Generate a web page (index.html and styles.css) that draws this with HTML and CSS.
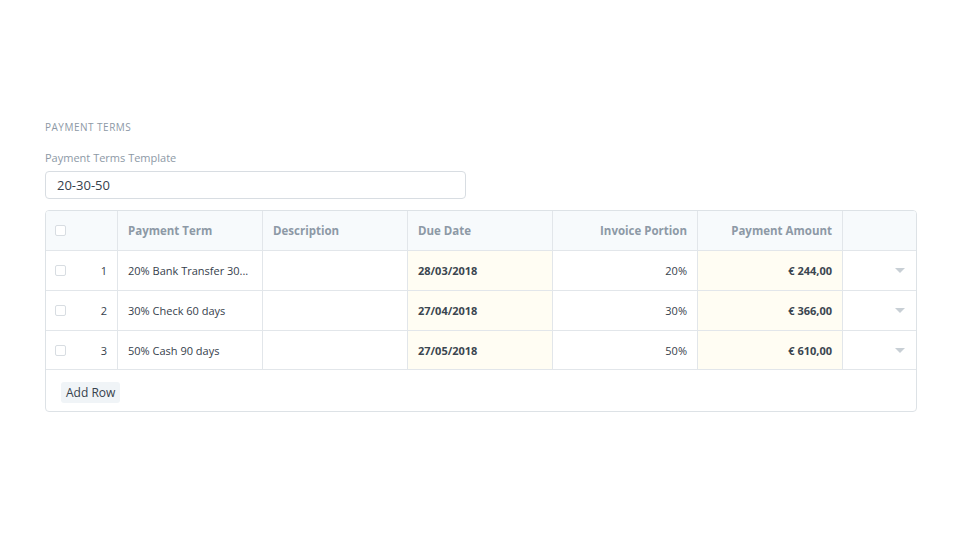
FILE: index.html
```html
<!DOCTYPE html>
<html>
<head>
<meta charset="utf-8">
<link rel="stylesheet" href="styles.css">
</head>
<body>
<div class="page">
  <div class="section-head">PAYMENT TERMS</div>
  <div class="field">
    <div class="field-label">Payment Terms Template</div>
    <div class="input">20-30-50</div>
  </div>
  <div class="grid">
    <div class="row head">
      <div class="cell c-idx"><span class="chk"></span></div>
      <div class="cell c-std">Payment Term</div>
      <div class="cell c-std">Description</div>
      <div class="cell c-std">Due Date</div>
      <div class="cell c-std right">Invoice Portion</div>
      <div class="cell c-std right">Payment Amount</div>
      <div class="cell c-last"></div>
    </div>
    <div class="row">
      <div class="cell c-idx"><span class="chk"></span><span class="num">1</span></div>
      <div class="cell c-std">20% Bank Transfer 30...</div>
      <div class="cell c-std"></div>
      <div class="cell c-std yellow bold">28/03/2018</div>
      <div class="cell c-std right">20%</div>
      <div class="cell c-std right yellow bold">€ 244,00</div>
      <div class="cell c-last"><span class="caret"></span></div>
    </div>
    <div class="row">
      <div class="cell c-idx"><span class="chk"></span><span class="num">2</span></div>
      <div class="cell c-std">30% Check 60 days</div>
      <div class="cell c-std"></div>
      <div class="cell c-std yellow bold">27/04/2018</div>
      <div class="cell c-std right">30%</div>
      <div class="cell c-std right yellow bold">€ 366,00</div>
      <div class="cell c-last"><span class="caret"></span></div>
    </div>
    <div class="row last-row">
      <div class="cell c-idx"><span class="chk"></span><span class="num">3</span></div>
      <div class="cell c-std">50% Cash 90 days</div>
      <div class="cell c-std"></div>
      <div class="cell c-std yellow bold">27/05/2018</div>
      <div class="cell c-std right">50%</div>
      <div class="cell c-std right yellow bold">€ 610,00</div>
      <div class="cell c-last"><span class="caret"></span></div>
    </div>
    <div class="grid-footer">
      <span class="btn">Add Row</span>
    </div>
  </div>
</div>
</body>
</html>
```

FILE: styles.css
```css
html, body {
  margin: 0;
  padding: 0;
  background: #ffffff;
}
body {
  font-family: "Open Sans", "Noto Sans", sans-serif;
  color: #36414c;
}
.page {
  padding: 120px 43px 0 45px;
}
.section-head {
  font-size: 10px;
  line-height: 14px;
  color: #8d99a6;
  letter-spacing: 0.5px;
  margin-bottom: 16px;
}
.field-label {
  font-size: 11px;
  line-height: 16px;
  color: #8d99a6;
  margin-bottom: 5px;
}
.input {
  width: 408px;
  height: 26px;
  border: 1px solid #d8dde2;
  border-radius: 4px;
  padding: 0 0 0 11px;
  font-size: 13px;
  line-height: 26px;
  color: #36414c;
}
.field {
  margin-bottom: 11px;
}
.grid {
  border: 1px solid #dde2e6;
  border-radius: 4px;
  overflow: hidden;
}
.row {
  display: flex;
  height: 39px;
  border-bottom: 1px solid #e2e6ea;
}
.row.last-row {
  height: 38px;
}
.row.head {
  background: #f7fafc;
  font-weight: 700;
  color: #8d99a6;
}
.cell {
  display: flex;
  align-items: center;
  font-size: 11px;
  box-sizing: border-box;
  border-right: 1px solid #e2e6ea;
  padding: 0 10px;
  white-space: nowrap;
  overflow: hidden;
}
.c-idx {
  width: 72px;
  padding: 0 10px 0 9px;
  justify-content: space-between;
}
.c-std {
  width: 145px;
  padding-left: 10px;
}
.c-last {
  flex: 1;
  border-right: none;
  justify-content: flex-end;
  padding-right: 11px;
}
.right {
  justify-content: flex-end;
  padding-right: 10px;
}
.yellow {
  background: #fffdf3;
}
.bold {
  font-weight: 700;
  color: #3b4650;
}
.head .cell {
  font-size: 11.5px;
}
.chk {
  width: 9px;
  height: 9px;
  border: 1px solid #d8dde2;
  border-radius: 2px;
  background: #fff;
}
.num {
  font-size: 11px;
  color: #36414c;
}
.caret {
  width: 0;
  height: 0;
  border-left: 5px solid transparent;
  border-right: 5px solid transparent;
  border-top: 5px solid #c8cfd5;
}
.grid-footer {
  height: 41px;
  padding: 10px 15px 0 15px;
  box-sizing: border-box;
}
.btn {
  display: inline-block;
  background: #f0f4f7;
  font-size: 12px;
  line-height: 21px;
  padding: 0 5px;
  border-radius: 3px;
  color: #36414c;
}
```
